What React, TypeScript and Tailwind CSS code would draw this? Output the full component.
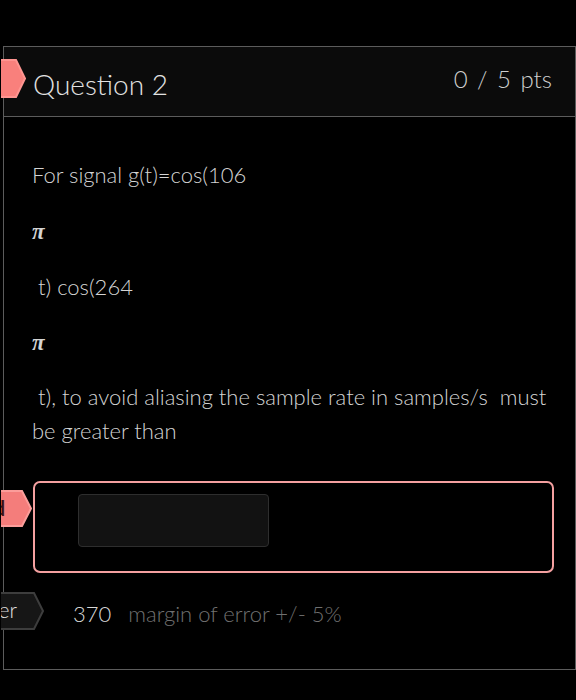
import React from "react";

const Tag = ({
  fill,
  stroke,
  width,
  height,
}: {
  fill: string;
  stroke: string;
  width: number;
  height: number;
}) => (
  <svg width={width} height={height} viewBox={`0 0 ${width} ${height}`} className="absolute left-0 top-0">
    <polygon
      points={`-12,1 ${width - 10},1 ${width - 1},${height / 2} ${width - 10},${height - 1} -12,${height - 1}`}
      fill={fill}
      stroke={stroke}
      strokeWidth="2"
    />
  </svg>
);

export default function App() {
  return (
    <div className="min-h-screen bg-black pt-[46px] pl-[3px] font-['Lato','Noto_Sans',sans-serif] font-light">
      <div className="relative w-[573px] h-[624px] border border-[#5c5c5c]">
        {/* header */}
        <div className="h-[70px] bg-[#0b0b0b] border-b border-[#5c5c5c] flex justify-between pl-[29px] pr-[23px]">
          <div className="text-[28px] text-[#e2e2e2] pt-[20px] leading-[34px]">Question 2</div>
          <div className="text-[24px] text-[#cfcfcf] pt-[17px] leading-[30px] [word-spacing:3px]">0 / 5 pts</div>
        </div>
        <div className="absolute left-[-3px] top-[12px] w-[25px] h-[39px]">
          <Tag fill="#f9807c" stroke="#ff9591" width={25} height={39} />
        </div>

        {/* question text */}
        <div className="pl-[28px] pr-[20px] pt-[41px] text-[22px] leading-[34px] text-[#d4d4d4]">
          <p className="mb-[23px]">For signal g(t)=cos(106</p>
          <p className="mb-[21px] font-['Liberation_Serif',serif] italic font-bold text-[23px]">π</p>
          <p className="mb-[22px]">&nbsp;t) cos(264</p>
          <p className="mb-[20px] font-['Liberation_Serif',serif] italic font-bold text-[23px]">π</p>
          <p>&nbsp;t), to avoid aliasing the sample rate in samples/s &nbsp;must be greater than</p>
        </div>

        {/* answer box */}
        <div className="relative mt-[33px] ml-[29px] w-[521px] h-[92px] rounded-[7px] border-2 border-[#f4a0a0] pl-[43px] pt-[11px]">
          <div className="w-[191px] h-[53px] rounded-[4px] bg-[#121212] border border-[#2e2e2e]" />
        </div>
        <div className="absolute left-[-3px] top-[443px] w-[31px] h-[37px] overflow-hidden">
          <Tag fill="#f47d7b" stroke="#fb9d9a" width={31} height={37} />
          <span className="absolute right-[27px] top-[4px] whitespace-nowrap text-[20px] leading-[28px] text-[#3b1212] font-bold">
            You Answered
          </span>
        </div>

        {/* correct answer */}
        <div className="mt-[24px] pl-[69px] flex items-center gap-[17px] text-[22px] leading-[34px]">
          <span className="text-[#d8d8d8]">370</span>
          <span className="text-[#707070]">margin of error +/- 5%</span>
        </div>
        <div className="absolute left-[-3px] top-[545px] w-[43px] h-[38px] overflow-hidden">
          <Tag fill="#161616" stroke="#3d3d3d" width={43} height={38} />
          <span className="absolute right-[27px] top-[4px] whitespace-nowrap text-[21px] leading-[28px] text-[#e0e0e0]">
            Correct Answer
          </span>
        </div>
      </div>
    </div>
  );
}
